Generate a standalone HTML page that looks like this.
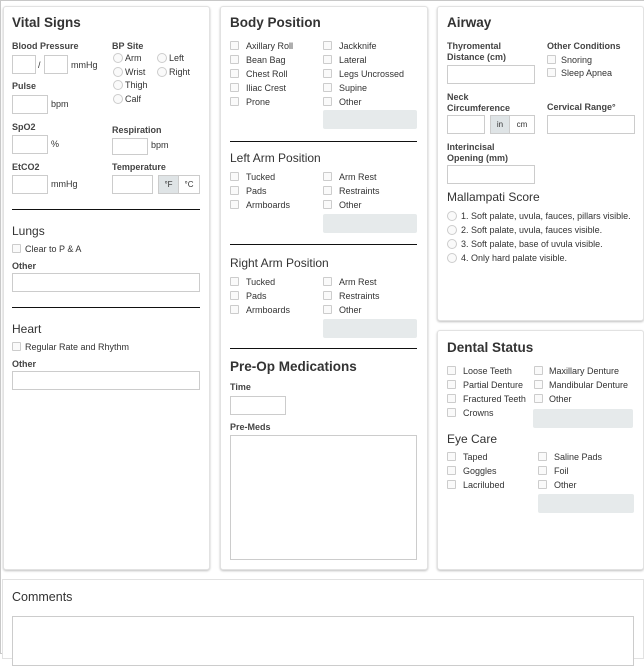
<!DOCTYPE html>
<html><head><meta charset="utf-8"><style>
*{box-sizing:border-box;margin:0;padding:0}
body{width:644px;height:654px;overflow:hidden;background:#fff;font-family:"Liberation Sans",sans-serif;color:#333;position:relative;font-size:9px}
.frame{position:absolute;left:0;top:0;width:644px;height:654px;border:1px solid #c8c8c8;border-right:none}
.p{position:absolute;background:#fff;border:1px solid #e2e2e2;border-radius:3px;box-shadow:0 1px 2px rgba(0,0,0,.25)}
.t{position:absolute;white-space:nowrap;line-height:10px;font-size:9px}
.l{position:absolute;white-space:nowrap;line-height:10px;font-size:9px;font-weight:bold;color:#444}
.h{position:absolute;white-space:nowrap;font-size:13.5px;font-weight:bold;color:#333;line-height:16px}
.h2{position:absolute;white-space:nowrap;font-size:12px;color:#333;line-height:14px}
.cb{position:absolute;width:9px;height:9px;border:1px solid #ccc;border-radius:1px;background:#fafafa}
.rd{position:absolute;width:10px;height:10px;border:1px solid #ccc;border-radius:50%;background:#fafafa}
.in{position:absolute;border:1px solid #ccc;background:#fff}
.g{position:absolute;background:#e6eaeb;border-radius:2px}
.hr{position:absolute;height:1px;background:#111}
.bt{position:absolute;border:1px solid #ccc;text-align:center;line-height:17px;font-size:8px}
</style></head><body>
<div class="frame"></div>

<!-- Vital Signs -->
<div class="p" style="left:3px;top:6px;width:207px;height:564px"></div>
<div class="h" style="left:12px;top:15px">Vital Signs</div>
<div class="l" style="left:12px;top:41px">Blood Pressure</div>
<div class="in" style="left:12px;top:55px;width:24px;height:19px"></div>
<div class="t" style="left:38px;top:60px">/</div>
<div class="in" style="left:44px;top:55px;width:24px;height:19px"></div>
<div class="t" style="left:71px;top:60px">mmHg</div>
<div class="l" style="left:112px;top:41px">BP Site</div>
<div class="rd" style="left:113px;top:53px"></div><div class="t" style="left:125px;top:53px">Arm</div>
<div class="rd" style="left:157px;top:53px"></div><div class="t" style="left:169px;top:53px">Left</div>
<div class="rd" style="left:113px;top:67px"></div><div class="t" style="left:125px;top:67px">Wrist</div>
<div class="rd" style="left:157px;top:67px"></div><div class="t" style="left:169px;top:67px">Right</div>
<div class="rd" style="left:113px;top:80px"></div><div class="t" style="left:125px;top:80px">Thigh</div>
<div class="rd" style="left:113px;top:94px"></div><div class="t" style="left:125px;top:94px">Calf</div>
<div class="l" style="left:12px;top:81px">Pulse</div>
<div class="in" style="left:12px;top:95px;width:36px;height:19px"></div>
<div class="t" style="left:51px;top:99px">bpm</div>
<div class="l" style="left:12px;top:122px">SpO2</div>
<div class="in" style="left:12px;top:135px;width:36px;height:19px"></div>
<div class="t" style="left:51px;top:139px">%</div>
<div class="l" style="left:112px;top:125px">Respiration</div>
<div class="in" style="left:112px;top:138px;width:36px;height:17px"></div>
<div class="t" style="left:151px;top:140px">bpm</div>
<div class="l" style="left:12px;top:162px">EtCO2</div>
<div class="in" style="left:12px;top:175px;width:36px;height:19px"></div>
<div class="t" style="left:51px;top:179px">mmHg</div>
<div class="l" style="left:112px;top:162px">Temperature</div>
<div class="in" style="left:112px;top:175px;width:41px;height:19px"></div>
<div class="bt" style="left:158px;top:175px;width:21px;height:19px;background:#dfe4e6">°F</div>
<div class="bt" style="left:178px;top:175px;width:22px;height:19px;background:#fff">°C</div>
<div class="hr" style="left:12px;top:209px;width:188px"></div>
<div class="h2" style="left:12px;top:224px">Lungs</div>
<div class="cb" style="left:12px;top:244px"></div><div class="t" style="left:25px;top:244px">Clear to P &amp; A</div>
<div class="l" style="left:12px;top:261px">Other</div>
<div class="in" style="left:12px;top:273px;width:188px;height:19px"></div>
<div class="hr" style="left:12px;top:307px;width:188px"></div>
<div class="h2" style="left:12px;top:322px">Heart</div>
<div class="cb" style="left:12px;top:342px"></div><div class="t" style="left:25px;top:342px">Regular Rate and Rhythm</div>
<div class="l" style="left:12px;top:359px">Other</div>
<div class="in" style="left:12px;top:371px;width:188px;height:19px"></div>

<!-- Body Position -->
<div class="p" style="left:220px;top:6px;width:208px;height:564px"></div>
<div class="h" style="left:230px;top:15px">Body Position</div>
<div class="cb" style="left:230px;top:41px"></div><div class="t" style="left:246px;top:41px">Axillary Roll</div>
<div class="cb" style="left:230px;top:55px"></div><div class="t" style="left:246px;top:55px">Bean Bag</div>
<div class="cb" style="left:230px;top:69px"></div><div class="t" style="left:246px;top:69px">Chest Roll</div>
<div class="cb" style="left:230px;top:83px"></div><div class="t" style="left:246px;top:83px">Iliac Crest</div>
<div class="cb" style="left:230px;top:97px"></div><div class="t" style="left:246px;top:97px">Prone</div>
<div class="cb" style="left:323px;top:41px"></div><div class="t" style="left:339px;top:41px">Jackknife</div>
<div class="cb" style="left:323px;top:55px"></div><div class="t" style="left:339px;top:55px">Lateral</div>
<div class="cb" style="left:323px;top:69px"></div><div class="t" style="left:339px;top:69px">Legs Uncrossed</div>
<div class="cb" style="left:323px;top:83px"></div><div class="t" style="left:339px;top:83px">Supine</div>
<div class="cb" style="left:323px;top:97px"></div><div class="t" style="left:339px;top:97px">Other</div>
<div class="g" style="left:323px;top:110px;width:94px;height:19px"></div>
<div class="hr" style="left:230px;top:141px;width:187px"></div>
<div class="h2" style="left:230px;top:151px">Left Arm Position</div>
<div class="cb" style="left:230px;top:172px"></div><div class="t" style="left:246px;top:172px">Tucked</div>
<div class="cb" style="left:230px;top:186px"></div><div class="t" style="left:246px;top:186px">Pads</div>
<div class="cb" style="left:230px;top:200px"></div><div class="t" style="left:246px;top:200px">Armboards</div>
<div class="cb" style="left:323px;top:172px"></div><div class="t" style="left:339px;top:172px">Arm Rest</div>
<div class="cb" style="left:323px;top:186px"></div><div class="t" style="left:339px;top:186px">Restraints</div>
<div class="cb" style="left:323px;top:200px"></div><div class="t" style="left:339px;top:200px">Other</div>
<div class="g" style="left:323px;top:214px;width:94px;height:19px"></div>
<div class="hr" style="left:230px;top:244px;width:187px"></div>
<div class="h2" style="left:230px;top:256px">Right Arm Position</div>
<div class="cb" style="left:230px;top:277px"></div><div class="t" style="left:246px;top:277px">Tucked</div>
<div class="cb" style="left:230px;top:291px"></div><div class="t" style="left:246px;top:291px">Pads</div>
<div class="cb" style="left:230px;top:305px"></div><div class="t" style="left:246px;top:305px">Armboards</div>
<div class="cb" style="left:323px;top:277px"></div><div class="t" style="left:339px;top:277px">Arm Rest</div>
<div class="cb" style="left:323px;top:291px"></div><div class="t" style="left:339px;top:291px">Restraints</div>
<div class="cb" style="left:323px;top:305px"></div><div class="t" style="left:339px;top:305px">Other</div>
<div class="g" style="left:323px;top:319px;width:94px;height:19px"></div>
<div class="hr" style="left:230px;top:348px;width:187px"></div>
<div class="h" style="left:230px;top:359px">Pre-Op Medications</div>
<div class="l" style="left:230px;top:382px">Time</div>
<div class="in" style="left:230px;top:396px;width:56px;height:19px"></div>
<div class="l" style="left:230px;top:422px">Pre-Meds</div>
<div class="in" style="left:230px;top:435px;width:187px;height:125px"></div>

<!-- Airway -->
<div class="p" style="left:437px;top:6px;width:207px;height:315px"></div>
<div class="h" style="left:447px;top:15px">Airway</div>
<div class="l" style="left:447px;top:41px">Thyromental</div>
<div class="l" style="left:447px;top:52px">Distance (cm)</div>
<div class="in" style="left:447px;top:65px;width:88px;height:19px"></div>
<div class="l" style="left:547px;top:41px">Other Conditions</div>
<div class="cb" style="left:547px;top:55px"></div><div class="t" style="left:561px;top:55px">Snoring</div>
<div class="cb" style="left:547px;top:68px"></div><div class="t" style="left:561px;top:68px">Sleep Apnea</div>
<div class="l" style="left:447px;top:92px">Neck</div>
<div class="l" style="left:447px;top:103px">Circumference</div>
<div class="in" style="left:447px;top:115px;width:38px;height:19px"></div>
<div class="bt" style="left:490px;top:115px;width:20px;height:19px;background:#dfe4e6">in</div>
<div class="bt" style="left:509px;top:115px;width:26px;height:19px;background:#fff">cm</div>
<div class="l" style="left:547px;top:102px">Cervical Range°</div>
<div class="in" style="left:547px;top:115px;width:88px;height:19px"></div>
<div class="l" style="left:447px;top:142px">Interincisal</div>
<div class="l" style="left:447px;top:153px">Opening (mm)</div>
<div class="in" style="left:447px;top:165px;width:88px;height:19px"></div>
<div class="h2" style="left:447px;top:190px">Mallampati Score</div>
<div class="rd" style="left:447px;top:211px"></div><div class="t" style="left:461px;top:211px">1. Soft palate, uvula, fauces, pillars visible.</div>
<div class="rd" style="left:447px;top:225px"></div><div class="t" style="left:461px;top:225px">2. Soft palate, uvula, fauces visible.</div>
<div class="rd" style="left:447px;top:239px"></div><div class="t" style="left:461px;top:239px">3. Soft palate, base of uvula visible.</div>
<div class="rd" style="left:447px;top:253px"></div><div class="t" style="left:461px;top:253px">4. Only hard palate visible.</div>

<!-- Dental -->
<div class="p" style="left:437px;top:330px;width:207px;height:240px"></div>
<div class="h" style="left:447px;top:340px">Dental Status</div>
<div class="cb" style="left:447px;top:366px"></div><div class="t" style="left:463px;top:366px">Loose Teeth</div>
<div class="cb" style="left:447px;top:380px"></div><div class="t" style="left:463px;top:380px">Partial Denture</div>
<div class="cb" style="left:447px;top:394px"></div><div class="t" style="left:463px;top:394px">Fractured Teeth</div>
<div class="cb" style="left:447px;top:408px"></div><div class="t" style="left:463px;top:408px">Crowns</div>
<div class="cb" style="left:534px;top:366px"></div><div class="t" style="left:549px;top:366px">Maxillary Denture</div>
<div class="cb" style="left:534px;top:380px"></div><div class="t" style="left:549px;top:380px">Mandibular Denture</div>
<div class="cb" style="left:534px;top:394px"></div><div class="t" style="left:549px;top:394px">Other</div>
<div class="g" style="left:533px;top:409px;width:100px;height:19px"></div>
<div class="h2" style="left:447px;top:432px">Eye Care</div>
<div class="cb" style="left:447px;top:452px"></div><div class="t" style="left:463px;top:452px">Taped</div>
<div class="cb" style="left:447px;top:466px"></div><div class="t" style="left:463px;top:466px">Goggles</div>
<div class="cb" style="left:447px;top:480px"></div><div class="t" style="left:463px;top:480px">Lacrilubed</div>
<div class="cb" style="left:538px;top:452px"></div><div class="t" style="left:554px;top:452px">Saline Pads</div>
<div class="cb" style="left:538px;top:466px"></div><div class="t" style="left:554px;top:466px">Foil</div>
<div class="cb" style="left:538px;top:480px"></div><div class="t" style="left:554px;top:480px">Other</div>
<div class="g" style="left:538px;top:494px;width:96px;height:19px"></div>

<!-- Comments -->
<div style="position:absolute;left:2px;top:579px;width:642px;height:80px;border:1px solid #e2e2e2;background:#fff"></div>
<div class="h2" style="left:12px;top:590px;font-size:12.5px">Comments</div>
<div class="in" style="left:12px;top:616px;width:622px;height:50px"></div>
</body></html>
